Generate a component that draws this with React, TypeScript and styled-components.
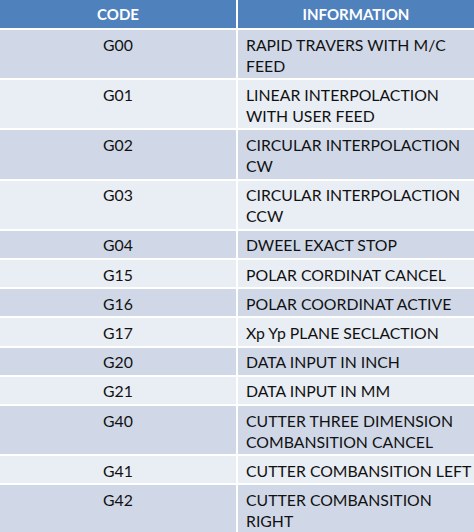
import React from "react";
import styled, { createGlobalStyle } from "styled-components";

const GlobalStyle = createGlobalStyle`
  html, body {
    margin: 0;
    padding: 0;
    background: #ffffff;
  }
`;

const Table = styled.table`
  width: 474px;
  border-collapse: collapse;
  table-layout: fixed;
  font-family: Lato, "Open Sans", sans-serif;
  color: #000000;
`;

const HeadCell = styled.th<{ $first?: boolean }>`
  width: 50%;
  background: #4f81bd;
  color: #ffffff;
  font-weight: 700;
  font-size: 15px;
  line-height: 20px;
  height: 28px;
  padding: 0;
  text-align: center;
  border-bottom: 2px solid #ffffff;
  border-right: ${(p) => (p.$first ? "2px solid #ffffff" : "none")};
`;

const Row = styled.tr<{ $light: boolean }>`
  background: ${(p) => (p.$light ? "#e9edf4" : "#d0d8e8")};
  border-bottom: 2px solid #ffffff;
`;

const Cell = styled.td`
  font-size: 15.8px;
  line-height: 21px;
  padding: 3.7px 2px 2.5px 8px;
  vertical-align: top;
  color: #111111;
`;

const CodeCell = styled(Cell)`
  text-align: center;
  padding-left: 0;
  padding-right: 0;
  border-right: 2px solid #ffffff;
`;

const InfoCell = styled(Cell)`
  text-align: left;
`;

const codes: [string, string][] = [
  ["G00", "RAPID TRAVERS WITH M/C FEED"],
  ["G01", "LINEAR INTERPOLACTION WITH USER FEED"],
  ["G02", "CIRCULAR INTERPOLACTION CW"],
  ["G03", "CIRCULAR INTERPOLACTION CCW"],
  ["G04", "DWEEL EXACT STOP"],
  ["G15", "POLAR CORDINAT CANCEL"],
  ["G16", "POLAR COORDINAT ACTIVE"],
  ["G17", "Xp Yp PLANE SECLACTION"],
  ["G20", "DATA INPUT IN INCH"],
  ["G21", "DATA INPUT IN MM"],
  ["G40", "CUTTER THREE DIMENSION COMBANSITION CANCEL"],
  ["G41", "CUTTER COMBANSITION LEFT"],
  ["G42", "CUTTER COMBANSITION RIGHT"],
];

const App = () => (
  <>
    <GlobalStyle />
    <Table>
      <thead>
        <tr>
          <HeadCell $first>CODE</HeadCell>
          <HeadCell>INFORMATION</HeadCell>
        </tr>
      </thead>
      <tbody>
        {codes.map(([code, info], i) => (
          <Row key={code} $light={i % 2 === 1}>
            <CodeCell>{code}</CodeCell>
            <InfoCell>{info}</InfoCell>
          </Row>
        ))}
      </tbody>
    </Table>
  </>
);

export default App;
